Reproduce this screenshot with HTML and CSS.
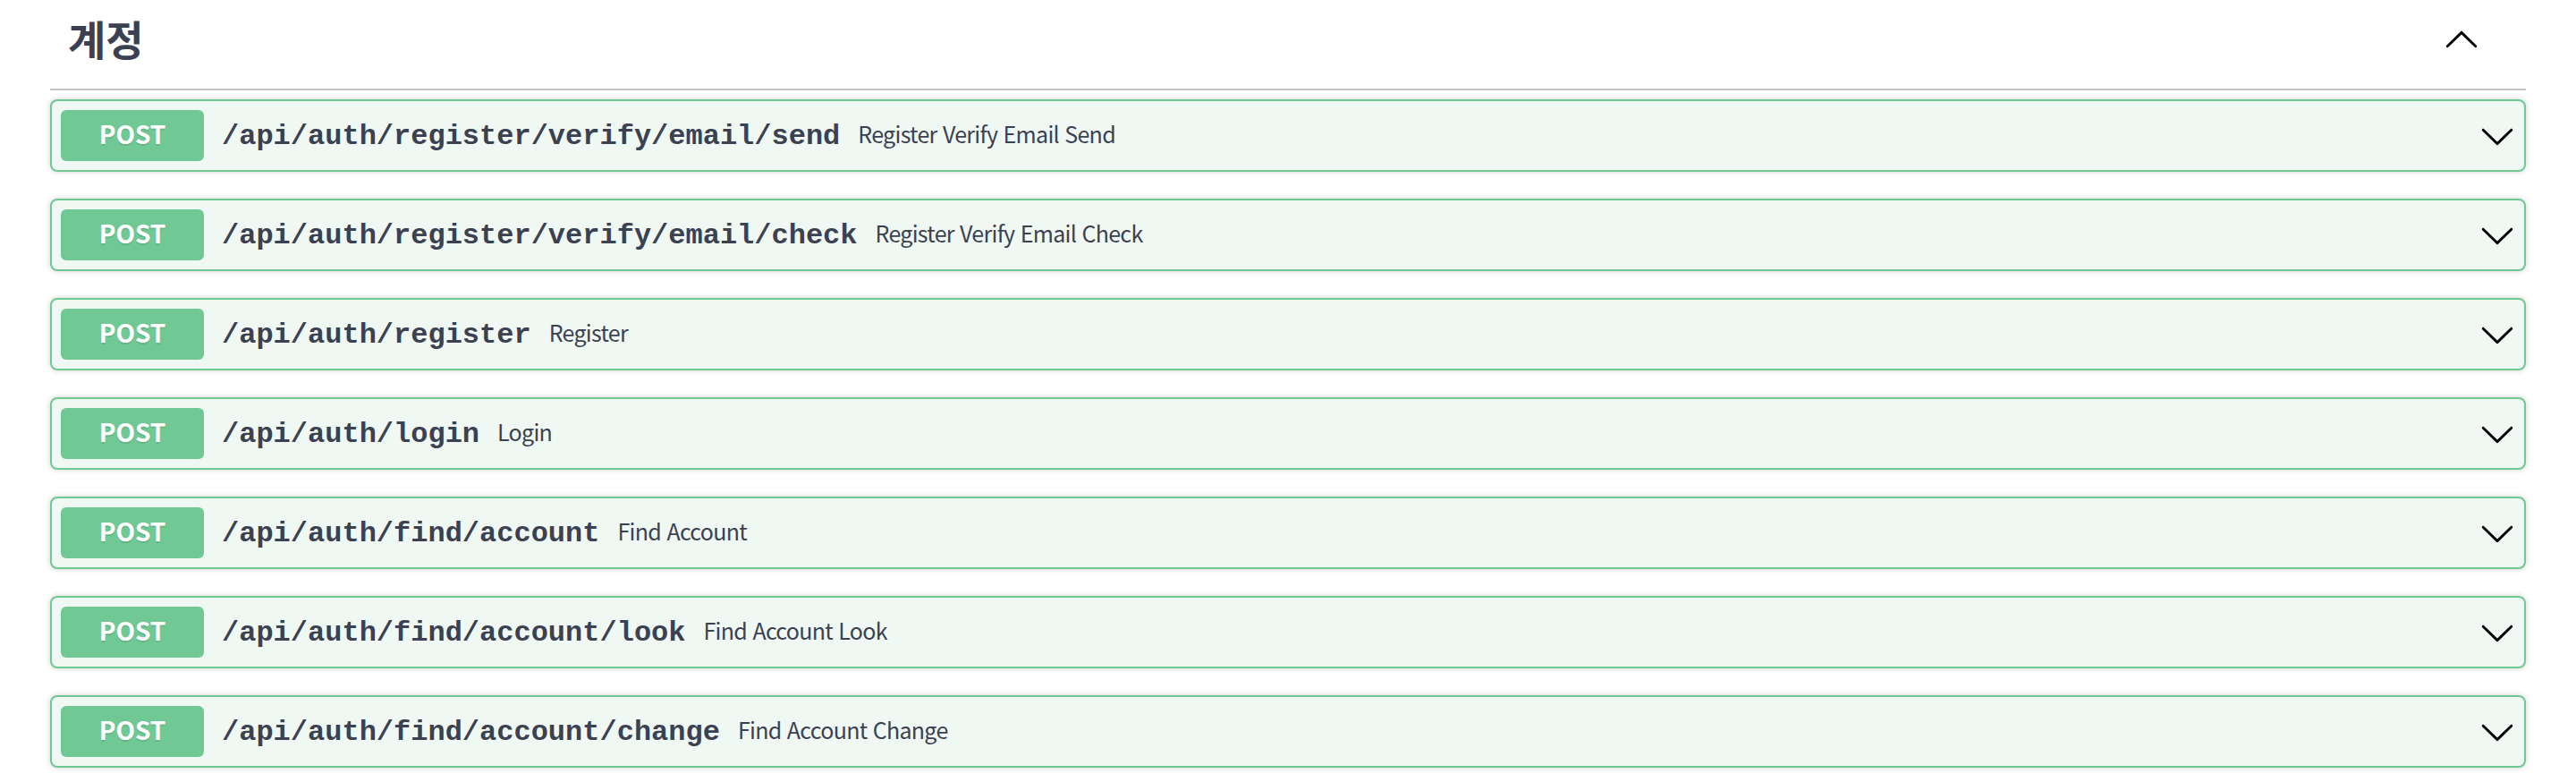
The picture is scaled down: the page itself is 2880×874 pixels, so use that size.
FILE: index.html
```html
<!DOCTYPE html>
<html lang="ko">
<head>
<meta charset="utf-8">
<title>계정</title>
<link rel="stylesheet" href="styles.css">
</head>
<body>
<section class="tag-section">
  <h3 class="tag-header">
    <span class="tag-name">계정</span>
    <svg class="arrow arrow-up" viewBox="0 0 20 20" width="40" height="40" aria-hidden="true"><path d="M17.418 6.109c.272-.268.709-.268.979 0s.271.701 0 .969l-7.908 7.83c-.27.268-.707.268-.979 0l-7.908-7.83c-.27-.268-.27-.701 0-.969.271-.268.709-.268.979 0L10 13.25l7.418-7.141z"/></svg>
  </h3>
  <div class="opblock">
    <div class="summary">
      <span class="method">POST</span>
      <span class="path">/api/auth/register/verify/email/send</span>
      <span class="desc">Register Verify Email Send</span>
      <svg class="arrow" viewBox="0 0 20 20" width="40" height="40" aria-hidden="true"><path d="M17.418 6.109c.272-.268.709-.268.979 0s.271.701 0 .969l-7.908 7.83c-.27.268-.707.268-.979 0l-7.908-7.83c-.27-.268-.27-.701 0-.969.271-.268.709-.268.979 0L10 13.25l7.418-7.141z"/></svg>
    </div>
  </div>
  <div class="opblock">
    <div class="summary">
      <span class="method">POST</span>
      <span class="path">/api/auth/register/verify/email/check</span>
      <span class="desc">Register Verify Email Check</span>
      <svg class="arrow" viewBox="0 0 20 20" width="40" height="40" aria-hidden="true"><path d="M17.418 6.109c.272-.268.709-.268.979 0s.271.701 0 .969l-7.908 7.83c-.27.268-.707.268-.979 0l-7.908-7.83c-.27-.268-.27-.701 0-.969.271-.268.709-.268.979 0L10 13.25l7.418-7.141z"/></svg>
    </div>
  </div>
  <div class="opblock">
    <div class="summary">
      <span class="method">POST</span>
      <span class="path">/api/auth/register</span>
      <span class="desc">Register</span>
      <svg class="arrow" viewBox="0 0 20 20" width="40" height="40" aria-hidden="true"><path d="M17.418 6.109c.272-.268.709-.268.979 0s.271.701 0 .969l-7.908 7.83c-.27.268-.707.268-.979 0l-7.908-7.83c-.27-.268-.27-.701 0-.969.271-.268.709-.268.979 0L10 13.25l7.418-7.141z"/></svg>
    </div>
  </div>
  <div class="opblock">
    <div class="summary">
      <span class="method">POST</span>
      <span class="path">/api/auth/login</span>
      <span class="desc">Login</span>
      <svg class="arrow" viewBox="0 0 20 20" width="40" height="40" aria-hidden="true"><path d="M17.418 6.109c.272-.268.709-.268.979 0s.271.701 0 .969l-7.908 7.83c-.27.268-.707.268-.979 0l-7.908-7.83c-.27-.268-.27-.701 0-.969.271-.268.709-.268.979 0L10 13.25l7.418-7.141z"/></svg>
    </div>
  </div>
  <div class="opblock">
    <div class="summary">
      <span class="method">POST</span>
      <span class="path">/api/auth/find/account</span>
      <span class="desc">Find Account</span>
      <svg class="arrow" viewBox="0 0 20 20" width="40" height="40" aria-hidden="true"><path d="M17.418 6.109c.272-.268.709-.268.979 0s.271.701 0 .969l-7.908 7.83c-.27.268-.707.268-.979 0l-7.908-7.83c-.27-.268-.27-.701 0-.969.271-.268.709-.268.979 0L10 13.25l7.418-7.141z"/></svg>
    </div>
  </div>
  <div class="opblock">
    <div class="summary">
      <span class="method">POST</span>
      <span class="path">/api/auth/find/account/look</span>
      <span class="desc">Find Account Look</span>
      <svg class="arrow" viewBox="0 0 20 20" width="40" height="40" aria-hidden="true"><path d="M17.418 6.109c.272-.268.709-.268.979 0s.271.701 0 .969l-7.908 7.83c-.27.268-.707.268-.979 0l-7.908-7.83c-.27-.268-.27-.701 0-.969.271-.268.709-.268.979 0L10 13.25l7.418-7.141z"/></svg>
    </div>
  </div>
  <div class="opblock">
    <div class="summary">
      <span class="method">POST</span>
      <span class="path">/api/auth/find/account/change</span>
      <span class="desc">Find Account Change</span>
      <svg class="arrow" viewBox="0 0 20 20" width="40" height="40" aria-hidden="true"><path d="M17.418 6.109c.272-.268.709-.268.979 0s.271.701 0 .969l-7.908 7.83c-.27.268-.707.268-.979 0l-7.908-7.83c-.27-.268-.27-.701 0-.969.271-.268.709-.268.979 0L10 13.25l7.418-7.141z"/></svg>
    </div>
  </div>
</section>
</body>
</html>
```
FILE: styles.css
```css
html, body {
  margin: 0;
  padding: 0;
  background: #ffffff;
}

body {
  font-family: "Noto Sans CJK KR", "Noto Sans", sans-serif;
  color: #3b4151;
}

.tag-section {
  margin: 0 56px;
}

.tag-header {
  display: flex;
  align-items: center;
  justify-content: space-between;
  margin: 0 0 10px;
  padding: 10px 52px 19px 20px;
  border-bottom: 2px solid rgba(59, 65, 81, 0.3);
  font-size: 46px;
  line-height: 70px;
  font-weight: 700;
  color: #3b4151;
}

.tag-name {
  display: block;
  line-height: 64px;
  padding-bottom: 6px;
}

.arrow {
  flex: none;
  fill: #000000;
}

.arrow-up {
  transform: rotate(180deg);
}

.opblock {
  margin: 0 0 30px;
  border: 2px solid #70c894;
  border-radius: 8px;
  background: #eff8f3;
  box-shadow: 0 0 6px rgba(0, 0, 0, 0.19);
}

.summary {
  display: flex;
  align-items: center;
  padding: 10px;
}

.method {
  flex: none;
  min-width: 160px;
  padding: 10px 0 14px;
  line-height: 33px;
  font-size: 28px;
  font-weight: 700;
  text-align: center;
  color: #ffffff;
  background: #70c894;
  border-radius: 6px;
  text-shadow: 0 2px 0 rgba(0, 0, 0, 0.1);
}

.path {
  flex: none;
  padding: 2px 20px 0;
  font-family: "Liberation Mono", "Courier New", monospace;
  font-size: 32px;
  font-weight: 700;
  color: #3b4151;
}

.desc {
  flex: 1 1 auto;
  padding-bottom: 6px;
  font-size: 25px;
  letter-spacing: -0.7px;
  color: #3b4151;
}
```
